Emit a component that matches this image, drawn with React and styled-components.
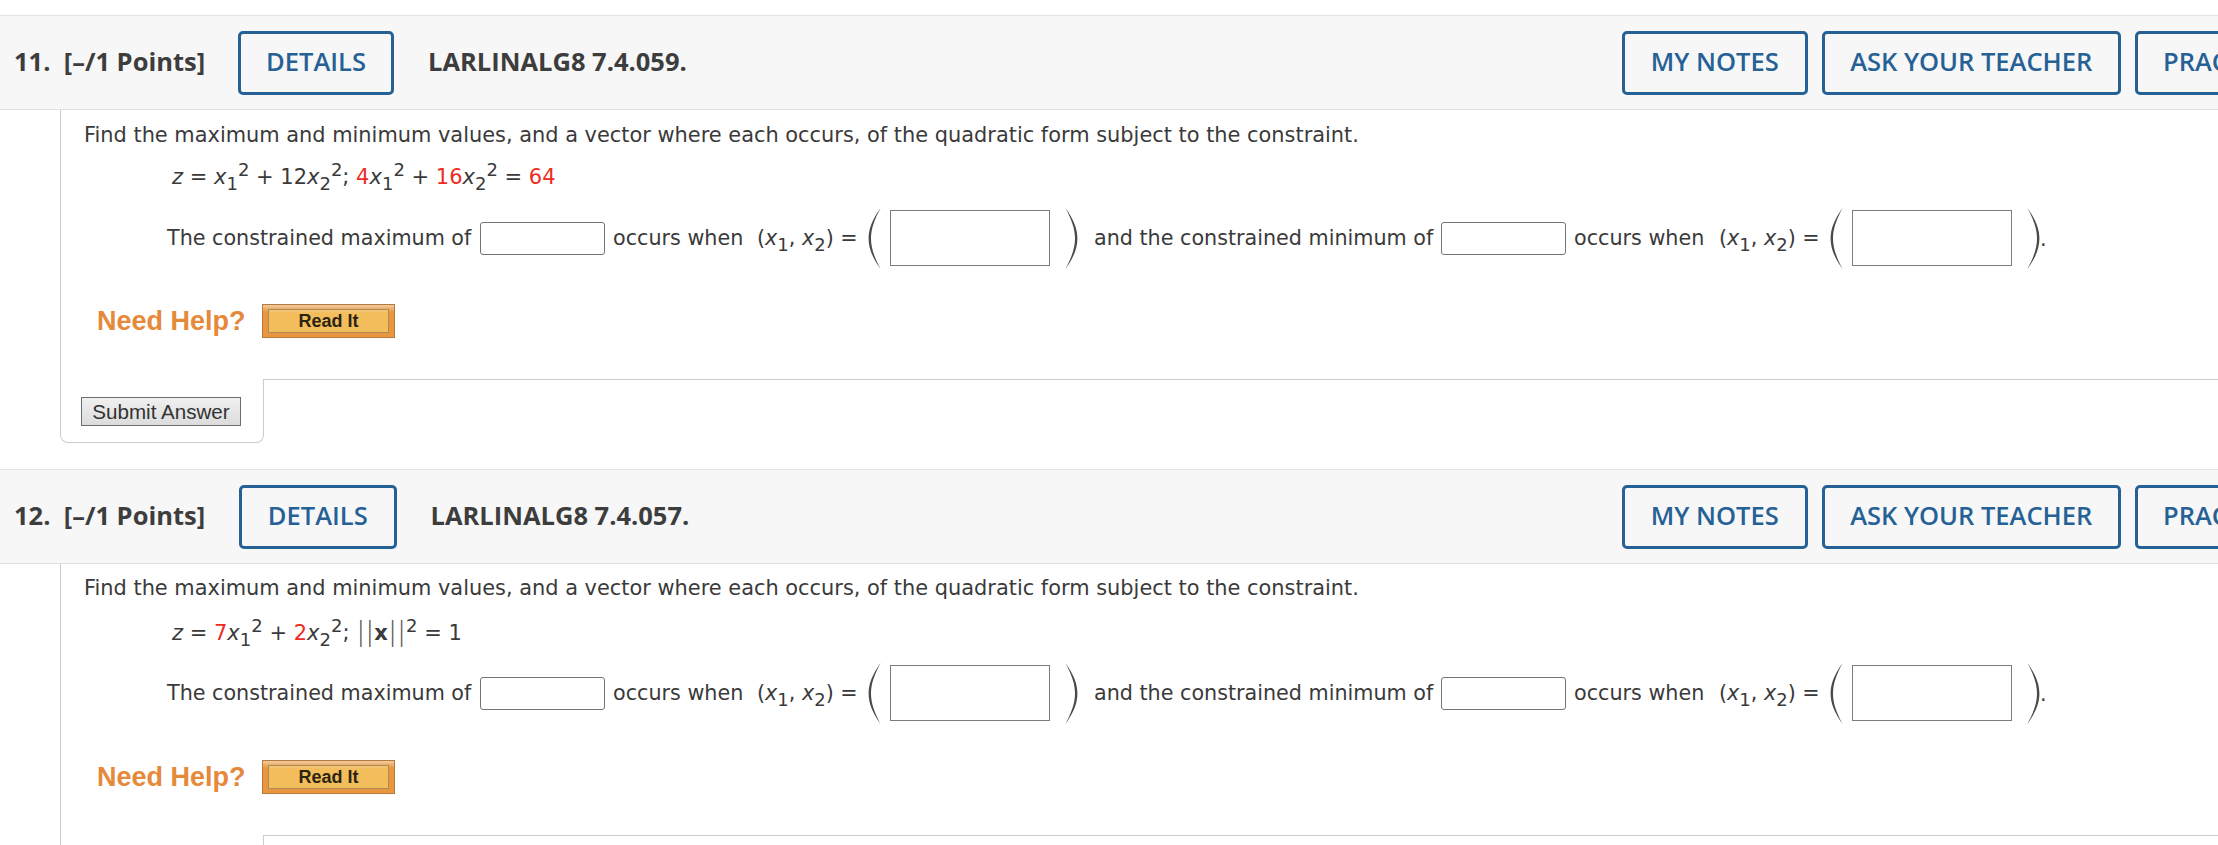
import React from 'react'
import styled, { createGlobalStyle } from 'styled-components'

const GlobalStyle = createGlobalStyle`
  html, body {
    margin: 0;
    height: 845px;
    overflow: hidden;
    background: #fff;
  }
  #root {
    width: 2218px;
    height: 845px;
    overflow: hidden;
    padding-top: 15px;
    box-sizing: border-box;
    font-family: "DejaVu Sans", Verdana, sans-serif;
    color: #3a3a3a;
  }
`

const Question = styled.section`
  margin-bottom: 26px;
`

const Header = styled.header`
  display: grid;
  grid-template-columns: 1622px max-content;
  align-items: center;
  height: 93px;
  background: #f7f7f7;
  border-top: 1px solid #e2e2e2;
  border-bottom: 1px solid #e2e2e2;
  font-family: "Open Sans", sans-serif;
  font-size: 25.5px;
  font-weight: 600;
`

const HeaderLeft = styled.div`
  display: flex;
  align-items: center;
  padding-left: 14px;
`

const Points = styled.span`
  width: ${p => p.$labelWidth}px;
  padding-bottom: 3px;
  color: #3d3d3d;
  font-size: 25.5px;
  font-weight: 700;
  white-space: pre;
`

const Code = styled.span`
  margin-left: 34px;
  padding-bottom: 3px;
  color: #3d3d3d;
  font-size: 25.5px;
  font-weight: 700;
`

const Tools = styled.div`
  display: flex;
  gap: 14px;
`

const HeaderButton = styled.button`
  flex: none;
  box-sizing: border-box;
  width: ${p => p.$w}px;
  height: 64px;
  padding: 0 0 3px;
  background: transparent;
  border: 3px solid #266196;
  border-radius: 5px;
  color: #266196;
  font: inherit;
  white-space: nowrap;
  overflow: hidden;
`

const Practice = styled(HeaderButton)`
  text-align: left;
  padding-left: 25px;
`

const Content = styled.div`
  margin-left: 60px;
  border-left: 1px solid #ccc;
  height: ${p => p.$h}px;
  box-sizing: border-box;
  padding-left: 23px;
  font-size: 20.9px;
`

const Prompt = styled.p`
  margin: 0;
  height: 26px;
  line-height: 26px;
  white-space: nowrap;
  padding-top: ${p => p.$top}px;
`

const Equation = styled.div`
  display: flex;
  align-items: baseline;
  height: 30px;
  line-height: 30px;
  margin-top: ${p => p.$top}px;
  padding-left: 88px;
  white-space: pre;
  font-size: 21px;
`

const Math = styled.i`
  font-style: italic;
`

const Red = styled.span`
  color: #ec2c1f;
`

const Strong = styled.b`
  font-weight: 700;
`

const Bars = styled.span`
  font-size: 27px;
  line-height: 20px;
  font-weight: 300;
  color: #555;
`

const Sub = styled.span`
  font-size: 18px;
  position: relative;
  top: 6px;
`

const Sup = styled.span`
  font-size: 18px;
  position: relative;
  top: -8px;
`

const AnswerRow = styled.div`
  display: flex;
  align-items: center;
  height: 61px;
  margin-top: ${p => p.$top}px;
  padding-left: 83px;
  font-size: 20.7px;
  white-space: pre;
`

const RowText = styled.span`
  flex: none;
  width: ${p => p.$w}px;
  margin-left: ${p => p.$left || 0}px;
  padding-bottom: 1px;
`

const ValueInput = styled.input`
  flex: none;
  box-sizing: border-box;
  width: 125px;
  height: 33px;
  margin: 0 8px 0 0;
  padding: 0;
  background: #fff;
  border: 1px solid #747474;
  border-radius: 3px;
`

const VectorInput = styled.input`
  flex: none;
  box-sizing: border-box;
  width: 160px;
  height: 56px;
  margin: 0 15px 2px 9px;
  padding: 0;
  background: #fff;
  border: 1px solid #7c7c7c;
  border-radius: 0;
`

const ParenSvg = styled.svg`
  flex: none;
  width: 13px;
  height: 61px;
  transform: ${p => (p.$flip ? 'scaleX(-1)' : 'none')};
`

const HelpRow = styled.div`
  display: flex;
  align-items: center;
  height: 34px;
  margin-top: ${p => p.$top}px;
  padding-left: 13px;
`

const NeedHelp = styled.span`
  width: 165px;
  font-family: "Liberation Sans", Arial, sans-serif;
  font-size: 27px;
  font-weight: 700;
  color: #e5893b;
`

const ReadIt = styled.button`
  box-sizing: border-box;
  width: 133px;
  height: 34px;
  padding: 0;
  background: linear-gradient(#f2cda0 0, #e9963f 22%);
  border: 1px solid #b27a3c;
  font-family: "Liberation Sans", Arial, sans-serif;
  font-size: 18px;
  font-weight: 700;
  color: #2c2412;
`

const ReadItFace = styled.span`
  display: block;
  box-sizing: border-box;
  height: 24px;
  margin: 0 5px;
  line-height: 22px;
  background: linear-gradient(#f0c77c 0, #f4bd5b 14%, #f4bd5b 100%);
  border: 1px solid #a98c57;
`

const Footer = styled.div`
  display: flex;
  margin-left: 60px;
`

const SubmitBox = styled.div`
  flex: none;
  box-sizing: border-box;
  width: 204px;
  height: ${p => p.$h}px;
  padding: 18px 0 0 20px;
  border: 1px solid #ccc;
  border-top: 0;
  border-radius: 0 0 8px 8px;
`

const FooterRule = styled.div`
  flex: 1;
  border-top: 1px solid #ccc;
`

const SubmitButton = styled.button`
  box-sizing: border-box;
  width: 160px;
  height: 29px;
  padding: 0;
  background: linear-gradient(#f0f0f0, #dcdcdc);
  border: 1.5px solid #6c6c6c;
  font-family: "Liberation Sans", Arial, sans-serif;
  font-size: 20.6px;
  color: #333;
`

function Paren({ flip }) {
  return (
    <ParenSvg $flip={flip} viewBox="0 0 13 61" aria-hidden="true">
      <path
        d="M12.6 0C4 12 .6 21 .6 30.5S4 49 12.6 61C6.2 49 3 40 3 30.5S6.2 12 12.6 0Z"
        fill="#4a4a4a"
      />
    </ParenSvg>
  )
}

function X({ n }) {
  return (
    <>
      <Math>x</Math>
      <Sub>{n}</Sub>
    </>
  )
}

function Answer({ top }) {
  const pair = (
    <>
      <X n={1} />, <X n={2} />
    </>
  )
  return (
    <AnswerRow $top={top}>
      <RowText $w={313}>The constrained maximum of</RowText>
      <ValueInput type="text" />
      <RowText $w={144}>occurs when</RowText>
      <RowText $w={111}>({pair}) =</RowText>
      <Paren />
      <VectorInput type="text" />
      <Paren flip />
      <RowText $w={347} $left={16}>and the constrained minimum of</RowText>
      <ValueInput type="text" />
      <RowText $w={145}>occurs when</RowText>
      <RowText $w={111}>({pair}) =</RowText>
      <Paren />
      <VectorInput type="text" />
      <Paren flip />
      <span>.</span>
    </AnswerRow>
  )
}

function QuestionBlock({ number, labelWidth, detailsWidth, code, equation, spacing, submit }) {
  return (
    <Question>
      <Header>
        <HeaderLeft>
          <Points $labelWidth={labelWidth}>{number}.  [–/1 Points]</Points>
          <HeaderButton $w={detailsWidth}>DETAILS</HeaderButton>
          <Code>{code}</Code>
        </HeaderLeft>
        <Tools>
          <HeaderButton $w={185.5}>MY NOTES</HeaderButton>
          <HeaderButton $w={299.5}>ASK YOUR TEACHER</HeaderButton>
          <Practice $w={280}>PRACTICE ANOTHER</Practice>
        </Tools>
      </Header>
      <Content $h={spacing.content}>
        <Prompt $top={spacing.prompt}>
          Find the maximum and minimum values, and a vector where each occurs, of the quadratic form subject to the constraint.
        </Prompt>
        <Equation $top={spacing.equation}>{equation}</Equation>
        <Answer top={spacing.answer} />
        <HelpRow $top={spacing.help}>
          <NeedHelp>Need Help?</NeedHelp>
          <ReadIt>
            <ReadItFace>Read It</ReadItFace>
          </ReadIt>
        </HelpRow>
      </Content>
      <Footer>
        <SubmitBox $h={submit ? 64 : 40}>
          {submit && <SubmitButton>Submit Answer</SubmitButton>}
        </SubmitBox>
        <FooterRule />
      </Footer>
    </Question>
  )
}

const squared = <Sup>2</Sup>

export default function App() {
  return (
    <>
      <GlobalStyle />
      <QuestionBlock
        number={11}
        labelWidth={224}
        detailsWidth={156}
        code="LARLINALG8 7.4.059."
        spacing={{ content: 269, prompt: 12, equation: 14, answer: 16, help: 35 }}
        submit
        equation={
          <>
            <Math>z</Math> = <X n={1} />{squared} + 12<X n={2} />{squared}; <Red>4</Red><X n={1} />{squared} + <Red>16</Red><X n={2} />{squared} = <Red>64</Red>
          </>
        }
      />
      <QuestionBlock
        number={12}
        labelWidth={225}
        detailsWidth={157.5}
        code="LARLINALG8 7.4.057."
        spacing={{ content: 271, prompt: 11, equation: 17, answer: 15, help: 36 }}
        equation={
          <>
            <Math>z</Math> = <Red>7</Red><X n={1} />{squared} + <Red>2</Red><X n={2} />{squared}; <Bars>||</Bars><Strong>x</Strong><Bars>||</Bars> {squared} = 1
          </>
        }
      />
    </>
  )
}
